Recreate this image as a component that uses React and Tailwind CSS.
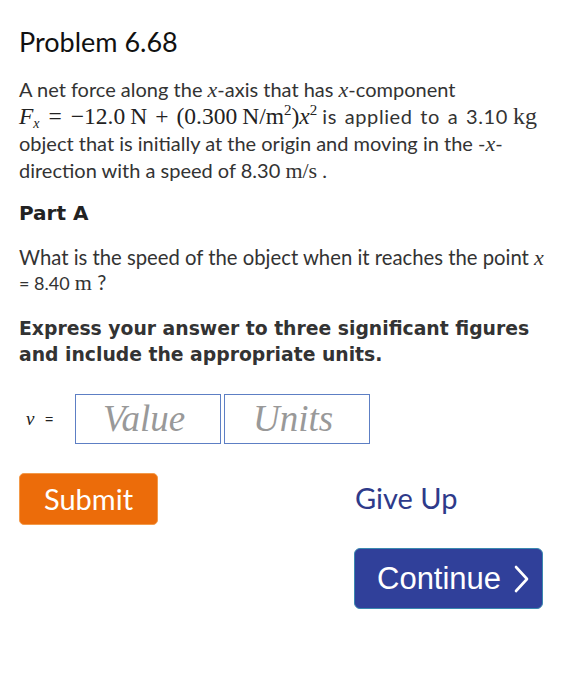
import React from "react";

const serif = "font-['Liberation_Serif',serif]";

function M({ children, italic }) {
  return (
    <span className={`${serif} text-[22px] leading-none ${italic ? "italic" : ""}`}>{children}</span>
  );
}

function Sup({ children }) {
  return <span className="relative -top-[9px] text-[15px] leading-none">{children}</span>;
}

export default function App() {
  return (
    <div className="bg-white w-[566px] h-[700px] px-[19px] pt-[26px] text-[#333] font-['Lato',sans-serif]">
      <h1 className="text-[27px] leading-[32px] text-[#111]">Problem 6.68</h1>

      <p className="mt-[18px] text-[20px] leading-[27px] whitespace-nowrap">
        A net force along the <M italic>x</M>-axis that has <M italic>x</M>-component
        <br />
        <span className={`${serif} text-[23.5px] leading-none text-[#222]`}>
          <i>F</i>
          <span className="relative top-[4px] text-[14px] italic leading-none">x</span>
          <span className="mx-[9px]">=</span>−12.0<span className="ml-[5px]">N</span>
          <span className="mx-[8px]">+</span>(0.300<span className="ml-[5px]">N/m</span>
          <Sup>2</Sup>)<i>x</i>
          <Sup>2</Sup>
        </span>{" "}
        <span className="tracking-[0.6px] [word-spacing:2px]">is applied to a 3.10</span>{" "}
        <span className={`${serif} text-[24px] leading-none`}>kg</span>
        <br />
        object that is initially at the origin and moving in the -<M italic>x</M>-
        <br />
        direction with a speed of 8.30 <M>m/s</M> .
      </p>

      <h2 className="mt-[16px] text-[20px] leading-[26px] font-bold text-[#222] font-['DejaVu_Sans',sans-serif]">
        Part A
      </h2>

      <p className="mt-[19px] text-[20.3px] leading-[25px] whitespace-nowrap">
        What is the speed of the object when it reaches the point <M italic>x</M>
        <br />
        <span className="text-[18px]">= 8.40</span> <M>m</M> ?
      </p>

      <p className="mt-[20px] text-[18.8px] leading-[26px] font-bold text-[#333] font-['DejaVu_Sans',sans-serif] whitespace-nowrap">
        Express your answer to three significant figures
        <br />
        and include the appropriate units.
      </p>

      <div className="mt-[26px] flex items-center">
        <span className="ml-[7px] w-[49px] text-[16px] text-[#222] flex items-center">
          <span className={`${serif} italic text-[19px]`}>v</span>
          <span className="ml-[10px]">=</span>
        </span>
        <div className="w-[146px] h-[50px] border-[1.5px] border-[#5d7fc4] flex items-center justify-center">
          <span className={`${serif} italic text-[37px] text-[#999] -ml-[8px]`}>Value</span>
        </div>
        <div className="ml-[3px] w-[146px] h-[50px] border-[1.5px] border-[#5d7fc4] flex items-center justify-center">
          <span className={`${serif} italic text-[37px] text-[#999] -ml-[8px]`}>Units</span>
        </div>
      </div>

      <div className="mt-[29px] flex items-center">
        <button className="w-[139px] h-[52px] rounded-[5px] bg-[#ec6c0a] border border-[#f39a4a] text-white text-[29px] leading-none pb-[2px]">
          Submit
        </button>
        <span className="ml-[197px] text-[29px] leading-none text-[#2e3a8a] pb-[4px]">Give Up</span>
      </div>

      <div className="mt-[23px] flex justify-end pr-[4px]">
        <button className="w-[189px] h-[61px] rounded-[6px] bg-[#30409a] border-[1.5px] border-[#3a88b0] text-white text-[31px] leading-none font-['Liberation_Sans',Arial,sans-serif] flex items-center pl-[22px]">
          Continue
          <svg className="ml-[12px]" width="17" height="30" viewBox="0 0 17 30" fill="none">
            <path d="M3 3 L14 15 L3 27" stroke="white" strokeWidth="2.6" strokeLinecap="round" strokeLinejoin="round" />
          </svg>
        </button>
      </div>
    </div>
  );
}
